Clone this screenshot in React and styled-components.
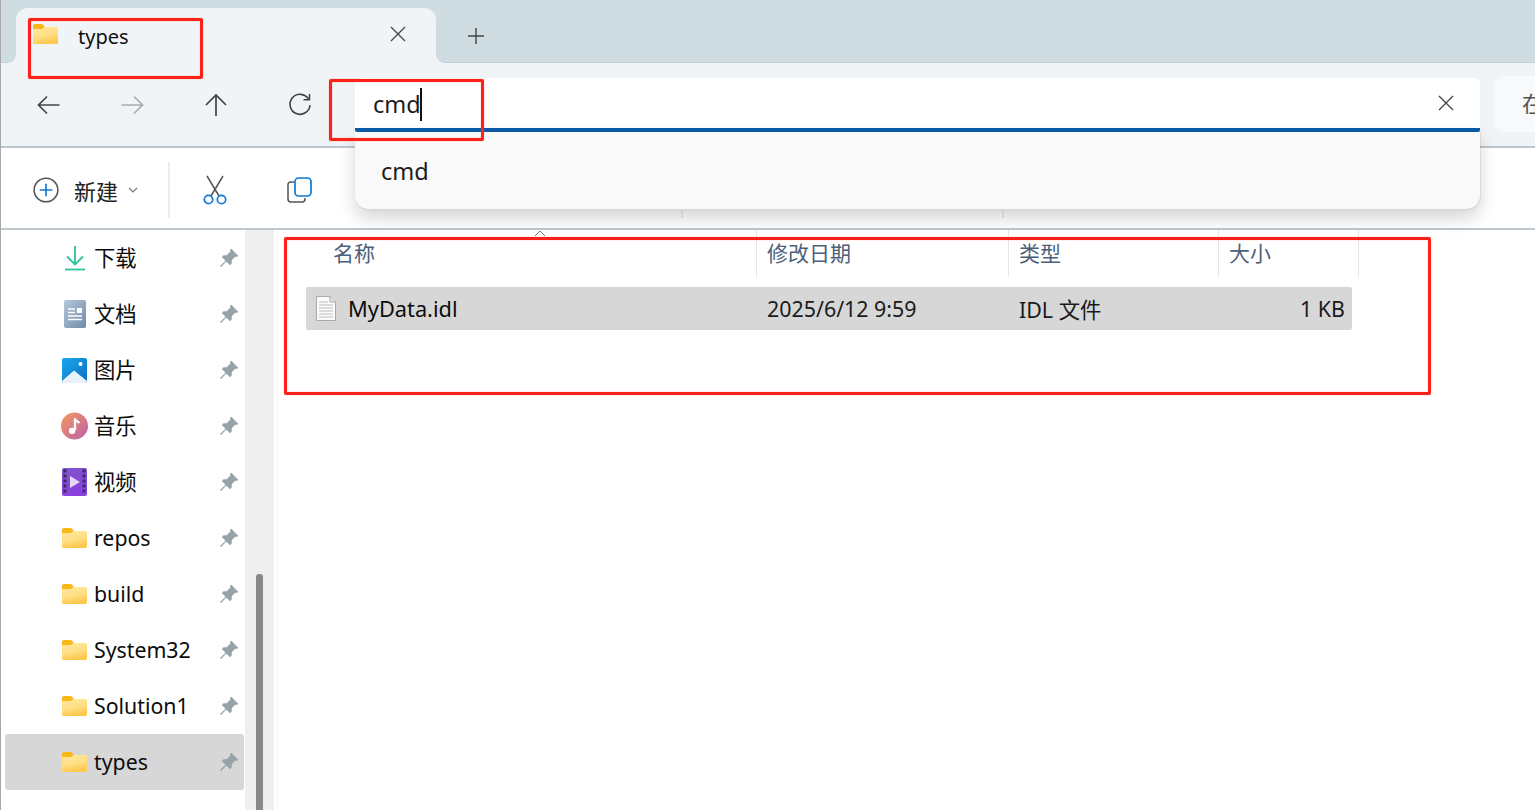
import React from "react";
import styled, { createGlobalStyle } from "styled-components";

const FONT = `"Noto Sans", "Noto Sans CJK SC", sans-serif`;

const Global = createGlobalStyle`
  html, body { margin: 0; padding: 0; background: #fff; overflow: hidden; }
  * { box-sizing: border-box; }
`;

const Window = styled.div`
  position: relative;
  width: 1535px;
  height: 810px;
  overflow: hidden;
  display: flex;
  flex-direction: column;
  background: #fff;
  border-left: 1px solid #a8a8a8;
  font-family: ${FONT};
  color: #1a1a1a;
`;

const TabStrip = styled.div`
  flex: none;
  height: 63px;
  padding: 8px 0 0 15px;
  display: flex;
  background: #cfdde2;
  border-bottom: 1px solid #c2d0d6;
`;

const Tab = styled.div`
  position: relative;
  width: 420px;
  height: 55px;
  margin-bottom: -1px;
  padding: 16px 0 0 17px;
  display: flex;
  background: #f0f4f6;
  border-radius: 12px 12px 0 0;
  &::before, &::after {
    content: "";
    position: absolute;
    bottom: 0;
    width: 8px;
    height: 8px;
  }
  &::before { left: -8px; background: radial-gradient(circle at 0 0, #cfdde2 7.5px, #f0f4f6 8px); }
  &::after { right: -8px; background: radial-gradient(circle at 100% 0, #cfdde2 7.5px, #f0f4f6 8px); }
`;

const TabTitle = styled.span`
  margin-left: 20px;
  font-size: 20px;
  line-height: 26px;
  flex: 1;
  color: #111;
`;

const TabClose = styled.button`
  width: 20px;
  height: 20px;
  margin: 1px 27px 0 0;
  padding: 0;
  border: 0;
  background: none;
  display: flex;
`;

const NewTab = styled.button`
  width: 20px;
  height: 20px;
  margin: 18px 0 0 30px;
  padding: 0;
  border: 0;
  background: none;
  display: flex;
`;

const NavBar = styled.div`
  flex: none;
  height: 85px;
  padding: 15px 0 0 5px;
  display: flex;
  align-items: flex-start;
  background: #f0f4f6;
  border-bottom: 2px solid #bcc8cc;
`;

const NavButton = styled.button`
  width: 84px;
  height: 54px;
  padding: 0;
  border: 0;
  background: none;
  display: flex;
  align-items: center;
  justify-content: center;
  flex: none;
`;

const SearchWrap = styled.div`
  position: relative;
  z-index: 2;
  flex: none;
  width: 1125px;
  height: 54px;
  margin-left: 13px;
`;

const SearchBox = styled.div`
  height: 54px;
  padding-left: 18px;
  display: flex;
  align-items: center;
  background: #fff;
  border-radius: 6px 6px 2px 2px;
  border-bottom: 4px solid #0b5cad;
  font-size: 23.500px;
`;

const SearchText = styled.span`
  margin-top: 2px;
  line-height: 32px;
  color: #1c1c1c;
`;

const Caret = styled.span`
  width: 2px;
  height: 33px;
  margin: 2px 0 0 -1px;
  background: #111;
`;

const SearchClear = styled.button`
  width: 18px;
  height: 18px;
  margin: 0 25px 0 auto;
  padding: 0;
  border: 0;
  background: none;
  display: flex;
`;

const Suggestions = styled.div`
  position: absolute;
  top: 54px;
  left: 0;
  right: 0;
  height: 78px;
  padding: 23px 0 0 26px;
  background: #f9f9f9;
  border-radius: 0 0 14px 14px;
  border-bottom: 1px solid #d6d6d6;
  box-shadow: 0 8px 18px rgba(0, 0, 0, 0.17), 1px 0 1px rgba(0, 0, 0, 0.08);
  font-size: 23.500px;
  line-height: 32px;
  color: #1c1c1c;
`;

const GoButton = styled.div`
  flex: none;
  width: 60px;
  height: 56px;
  margin: -2px 0 0 15px;
  padding: 10px 0 0 27px;
  background: #f7f9fa;
  border-radius: 8px;
  font-size: 22px;
  line-height: 34px;
  color: #555;
`;

const Toolbar = styled.div`
  flex: none;
  height: 82px;
  display: flex;
  align-items: flex-start;
  padding: 14px 0 0 32px;
  border-bottom: 2px solid #bcc8cc;
`;

const NewButton = styled.div`
  display: flex;
  align-items: center;
  height: 56px;
  font-size: 22px;
  color: #222;
`;

const NewLabel = styled.span`
  margin-left: 15px;
`;

const Chevron = styled.svg`
  margin-left: 10px;
`;

const ToolDivider = styled.div`
  flex: none;
  width: 2px;
  height: 56px;
  margin-left: ${(p) => p.$left}px;
  background: #ececec;
`;

const ToolIcon = styled.div`
  flex: none;
  height: 56px;
  margin-left: ${(p) => p.$left}px;
  display: flex;
  align-items: center;
`;

const Main = styled.div`
  flex: 1;
  display: flex;
  min-height: 0;
`;

const Sidebar = styled.nav`
  flex: none;
  width: 244px;
  padding: 0 1px 0 4px;
  display: flex;
  flex-direction: column;
`;

const NavRow = styled.div`
  flex: none;
  height: 56px;
  padding-left: 56px;
  display: flex;
  align-items: center;
  border-radius: 3px;
  background: ${(p) => (p.$active ? "#d7d7d7" : "transparent")};
  font-size: 21.300px;
  color: #0c0c0c;
`;

const IconSlot = styled.span`
  flex: none;
  width: 27px;
  margin-right: 6px;
  display: flex;
  justify-content: center;
`;

const NavLabel = styled.span`
  flex: 1;
  line-height: 28px;
`;

const PinSlot = styled.span`
  flex: none;
  margin-right: 5px;
  display: flex;
`;

const Gutter = styled.div`
  flex: none;
  width: 29px;
  padding: 344px 0 0 11px;
  background: #efefef;
`;

const Thumb = styled.div`
  width: 7px;
  height: 300px;
  border-radius: 3px 3px 0 0;
  background: #888;
`;

const Content = styled.section`
  position: relative;
  flex: 1;
  margin-left: 3px;
  border-left: 1px solid #f4f4f4;
`;

const SortMark = styled.svg`
  position: absolute;
  left: 256px;
  top: 0;
`;

const HeaderRow = styled.div`
  display: grid;
  grid-template-columns: 479px 252px 210px 140px;
  height: 46px;
`;

const HeaderCell = styled.div`
  padding-left: ${(p) => p.$pad ?? 10}px;
  border-right: 1px solid #e5e5e5;
  font-size: 21px;
  line-height: 47px;
  color: #4c6079;
`;

const FileRow = styled.div`
  width: 1046px;
  height: 43px;
  margin: 11px 0 0 28px;
  padding-right: 7px;
  display: grid;
  grid-template-columns: 461px 252px 1fr auto;
  align-items: center;
  background: #d7d7d7;
  border-radius: 2px;
  font-size: 21.400px;
  color: #1a1a1a;
`;

const FileName = styled.div`
  padding-left: 10px;
  display: flex;
  align-items: center;
  gap: 12px;
  font-size: 21.800px;
  color: #0c0c0c;
`;

const Annotation = styled.div`
  position: absolute;
  z-index: 5;
  left: ${(p) => p.$x}px;
  top: ${(p) => p.$y}px;
  width: ${(p) => p.$w}px;
  height: ${(p) => p.$h}px;
  border: 3px solid #fd2219;
  border-radius: 2px;
  box-shadow: 0 0 1px rgba(253, 34, 25, 0.7), inset 0 0 1px rgba(253, 34, 25, 0.7);
  pointer-events: none;
`;

const Folder = ({ id }) => (
  <svg width="25" height="20" viewBox="0 0 25 20">
    <defs>
      <linearGradient id={id} x1="0" y1="0" x2="0.3" y2="1">
        <stop offset="0" stopColor="#ffe79a" />
        <stop offset="0.6" stopColor="#ffdf85" />
        <stop offset="1" stopColor="#fcc94f" />
      </linearGradient>
    </defs>
    <path d="M0 2a2 2 0 0 1 2-2h6c1 0 1.500.4 2.200 1l1.300 1.500V6H0z" fill="#f9b51c" />
    <path d="M0 6a1 1 0 0 1 1-1h8l2.500-2H24a1 1 0 0 1 1 1V18.500a1.500 1.500 0 0 1-1.500 1.500H1.500A1.500 1.500 0 0 1 0 18.500z" fill={`url(#${id})`} />
  </svg>
);

const Pin = () => (
  <svg width="20" height="20" viewBox="0 0 20 20">
    <path
      d="M12.300.8 19.200 7.700 17.800 9.100 16.500 8.500 12.700 12.300 12.700 15.500 11 17.200 7.300 13.500 2 19 1 18 6.500 12.700 2.800 9 4.500 7.300 7.700 7.300 11.500 3.500 10.900 2.200Z"
      fill="#96a2a8"
    />
  </svg>
);

const X = ({ size = 18, color = "#444" }) => (
  <svg width={size} height={size} viewBox="0 0 18 18">
    <path d="M2 2 16 16M16 2 2 16" stroke={color} strokeWidth="1.300" fill="none" />
  </svg>
);

const Arrow = ({ d, color = "#444" }) => (
  <svg width="26" height="26" viewBox="0 0 26 26">
    <path d={d} stroke={color} strokeWidth="1.700" fill="none" />
  </svg>
);

const DownloadIcon = () => (
  <svg width="22" height="26" viewBox="0 0 22 26">
    <path d="M11 1V19M3 11.500 11 19.500 19 11.500" stroke="#2fc29a" strokeWidth="1.800" fill="none" />
    <path d="M1 24.500H21" stroke="#2fc29a" strokeWidth="1.800" />
  </svg>
);

const DocIcon = () => (
  <svg width="22" height="28" viewBox="0 0 22 28">
    <defs>
      <linearGradient id="docG" x1="0" y1="0" x2="1" y2="1">
        <stop offset="0" stopColor="#b5c8dc" />
        <stop offset="1" stopColor="#6f8ba8" />
      </linearGradient>
    </defs>
    <rect width="22" height="28" rx="2" fill="url(#docG)" />
    <path d="M4 9H11M4 12.500H11M4 16H18M4 19.500H18" stroke="#fff" strokeWidth="1.400" />
    <rect x="13" y="8" width="5" height="5" fill="#fff" />
  </svg>
);

const PicIcon = () => (
  <svg width="25" height="25" viewBox="0 0 25 25">
    <defs>
      <linearGradient id="picG" x1="0" y1="0" x2="1" y2="1">
        <stop offset="0" stopColor="#1ba7ee" />
        <stop offset="1" stopColor="#0b6fc2" />
      </linearGradient>
    </defs>
    <rect width="25" height="25" rx="2" fill="url(#picG)" />
    <circle cx="18.500" cy="6" r="2" fill="#fff" />
    <path d="M0 23 12 12.500 25 23V23a2 2 0 0 1-2 2H2a2 2 0 0 1-2-2z" fill="#e8f2fb" />
  </svg>
);

const MusicIcon = () => (
  <svg width="28" height="28" viewBox="0 0 28 28">
    <defs>
      <linearGradient id="musG" x1="0" y1="0" x2="1" y2="1">
        <stop offset="0" stopColor="#f59a5a" />
        <stop offset="1" stopColor="#bb5fae" />
      </linearGradient>
    </defs>
    <circle cx="14" cy="14" r="14" fill="url(#musG)" />
    <path d="M14.500 6V18.500" stroke="#fff" strokeWidth="2.400" />
    <path d="M14 6.500c1 2.500 4 2.500 5 4.500" stroke="#fff" strokeWidth="2.200" fill="none" />
    <circle cx="11.500" cy="19" r="3.300" fill="#fff" />
  </svg>
);

const VideoIcon = () => (
  <svg width="25" height="28" viewBox="0 0 25 28">
    <defs>
      <linearGradient id="vidG" x1="0" y1="0" x2="0.4" y2="1">
        <stop offset="0" stopColor="#7e56c8" />
        <stop offset="1" stopColor="#8a3fe0" />
      </linearGradient>
    </defs>
    <rect width="25" height="28" rx="2" fill="url(#vidG)" />
    {[3, 8, 13, 18, 23].map((y) => (
      <g key={y}>
        <rect x="1.500" y={y - 1.500} width="3" height="3" fill="#3c2a66" />
        <rect x="20.500" y={y - 1.500} width="3" height="3" fill="#3c2a66" />
      </g>
    ))}
    <path d="M8 8 18 14 8 20z" fill="#e4d8f6" />
  </svg>
);

const FileIcon = () => (
  <svg width="20" height="25" viewBox="0 0 20 25">
    <path d="M.5.500H14L19.500 6V24.500H.5z" fill="#fbfbfb" stroke="#a9a9a9" />
    <path d="M14 .5V6H19.500" fill="#e6e6e6" stroke="#a9a9a9" />
    <path d="M3 6H12M3 9H17M3 12H17M3 15H17M3 18H17M3 21H17" stroke="#bcbcbc" />
  </svg>
);

const places = [
  { label: "下载", icon: <DownloadIcon /> },
  { label: "文档", icon: <DocIcon /> },
  { label: "图片", icon: <PicIcon /> },
  { label: "音乐", icon: <MusicIcon /> },
  { label: "视频", icon: <VideoIcon /> },
  { label: "repos" },
  { label: "build" },
  { label: "System32" },
  { label: "Solution1" },
  { label: "types", active: true },
];

export default function App() {
  return (
    <Window>
      <Global />
      <TabStrip>
        <Tab>
          <Folder id="tabF" />
          <TabTitle>types</TabTitle>
          <TabClose><X /></TabClose>
        </Tab>
        <NewTab>
          <svg width="20" height="20" viewBox="0 0 20 20">
            <path d="M10 2V18M2 10H18" stroke="#444" strokeWidth="1.400" />
          </svg>
        </NewTab>
      </TabStrip>
      <NavBar>
        <NavButton><Arrow d="M24.500 13H3.500M12 4.500 3.500 13 12 21.500" /></NavButton>
        <NavButton><Arrow d="M2.500 13H23.500M15 4.500 23.500 13 15 21.500" color="#a8acae" /></NavButton>
        <NavButton><Arrow d="M13 24V3M3 13 13 3 23 13" /></NavButton>
        <NavButton>
          <svg width="26" height="26" viewBox="0 0 26 26">
            <path d="M21.500 7A10 10 0 1 0 23 13" stroke="#444" strokeWidth="1.600" fill="none" />
            <path d="M22.500 2V7.800H16.500" stroke="#444" strokeWidth="1.600" fill="none" />
          </svg>
        </NavButton>
        <SearchWrap>
          <SearchBox>
            <SearchText>cmd</SearchText>
            <Caret />
            <SearchClear><X /></SearchClear>
          </SearchBox>
          <Suggestions>cmd</Suggestions>
        </SearchWrap>
        <GoButton>在</GoButton>
      </NavBar>
      <Toolbar>
        <NewButton>
          <svg width="26" height="26" viewBox="0 0 27 27">
            <circle cx="13.500" cy="13.500" r="12.300" stroke="#555" strokeWidth="1.600" fill="none" />
            <path d="M13.500 7V20M7 13.500H20" stroke="#0f78d4" strokeWidth="1.700" />
          </svg>
          <NewLabel>新建</NewLabel>
          <Chevron width="10" height="6" viewBox="0 0 10 6">
            <path d="M1 1 5 5 9 1" stroke="#777" strokeWidth="1.200" fill="none" />
          </Chevron>
        </NewButton>
        <ToolDivider $left={30} />
        <ToolIcon $left={32}>
          <svg width="26" height="30" viewBox="0 0 26 30">
            <path d="M5 1 17 21M21 1 9 21" stroke="#555" strokeWidth="1.500" fill="none" />
            <circle cx="6.500" cy="24.500" r="4.200" stroke="#0f78d4" strokeWidth="1.700" fill="none" />
            <circle cx="19.500" cy="24.500" r="4.200" stroke="#0f78d4" strokeWidth="1.700" fill="none" />
          </svg>
        </ToolIcon>
        <ToolIcon $left={59}>
          <svg width="26" height="26" viewBox="0 0 26 26">
            <path d="M7 5H3.500A2.500 2.500 0 0 0 1 7.500V22a3 3 0 0 0 3 3H15a3 3 0 0 0 3-3v-1" stroke="#555" strokeWidth="1.500" fill="none" />
            <rect x="8" y="1" width="16" height="18" rx="3.500" stroke="#0f78d4" strokeWidth="1.700" fill="none" />
          </svg>
        </ToolIcon>
        <ToolDivider $left={368} />
        <ToolDivider $left={319} />
      </Toolbar>
      <Main>
        <Sidebar>
          {places.map((p) => (
            <NavRow key={p.label} $active={p.active}>
              <IconSlot>{p.icon ?? <Folder id={`f-${p.label}`} />}</IconSlot>
              <NavLabel>{p.label}</NavLabel>
              <PinSlot><Pin /></PinSlot>
            </NavRow>
          ))}
        </Sidebar>
        <Gutter><Thumb /></Gutter>
        <Content>
          <SortMark width="12" height="7" viewBox="0 0 12 7">
            <path d="M1 6 6 1 11 6" stroke="#777" strokeWidth="1" fill="none" />
          </SortMark>
          <HeaderRow>
            <HeaderCell $pad={55}>名称</HeaderCell>
            <HeaderCell>修改日期</HeaderCell>
            <HeaderCell>类型</HeaderCell>
            <HeaderCell>大小</HeaderCell>
          </HeaderRow>
          <FileRow>
            <FileName><FileIcon />MyData.idl</FileName>
            <span>2025/6/12 9:59</span>
            <span>IDL 文件</span>
            <span>1 KB</span>
          </FileRow>
        </Content>
      </Main>
      <Annotation $x={27} $y={18} $w={175} $h={61} />
      <Annotation $x={328} $y={79} $w={155} $h={62} />
      <Annotation $x={283} $y={237} $w={1147} $h={158} />
    </Window>
  );
}
